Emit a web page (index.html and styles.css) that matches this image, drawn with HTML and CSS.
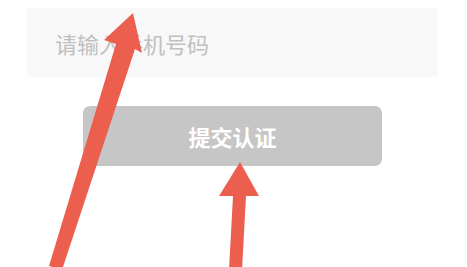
FILE: index.html
```html
<!DOCTYPE html>
<html lang="zh-CN">
<head>
  <meta charset="UTF-8" />
  <meta name="viewport" content="width=device-width, initial-scale=1" />
  <title>提交认证</title>
  <link rel="stylesheet" href="styles.css">
</head>
<body>
<div class="page">
  <div class="champ">
    <input class="phone" type="text" placeholder="请输入手机号码">
  </div>
  <div class="actions">
    <button class="submit">提交认证</button>
  </div>
</div>
<!-- fleches d'annotation -->
<svg class="annot" width="467" height="267" viewBox="0 0 467 267">
  <polygon fill="#ec5f4f" points="133,13 142,53 135,49 62,270 49,266 116,44 104,40"/>
  <polygon fill="#ec5f4f" points="240,162 259,196 246,196 242,270 229,270 233,196 219,196"/>
</svg>
</body>
</html>
```

FILE: styles.css
```css
body {
  margin: 0;
  background: #fff;
  font-family: "Noto Sans CJK SC", "Noto Sans", sans-serif;
}
.page {
  padding-top: 8px;
  width: 467px;
  height: 267px;
  box-sizing: border-box;
}
.champ {
  margin-left: 27px;
  width: 411px;
  height: 69px;
  background: #f8f8f8;
  border-radius: 4px;
  display: flex;
  align-items: center;
}
.phone {
  border: none;
  background: transparent;
  outline: none;
  padding: 0 0 0 28px;
  width: 100%;
  font-family: inherit;
  font-size: 22px;
  color: #333;
}
.phone::placeholder {
  color: #c0c0c0;
}
.actions {
  margin-top: 29px;
  margin-left: 83px;
}
.submit {
  width: 299px;
  height: 60px;
  border: none;
  border-radius: 7px;
  background: #c6c6c6;
  color: #fff;
  font-family: inherit;
  font-size: 22px;
  font-weight: bold;
}
.annot {
  position: absolute;
  top: 0;
  left: 0;
}
```
